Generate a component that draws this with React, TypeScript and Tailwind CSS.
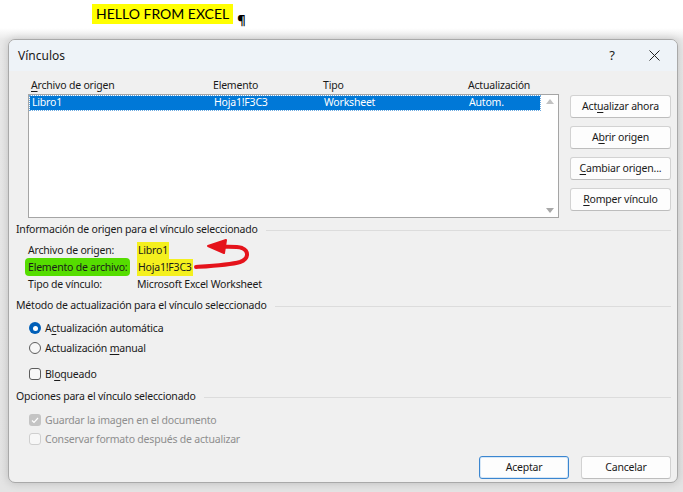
import React from "react"

const font = { fontFamily: '"Noto Sans", "Open Sans", sans-serif' }

function U({ children }: { children: React.ReactNode }) {
  return <span className="underline underline-offset-2">{children}</span>
}

function Btn({ children, primary, w = "w-[101px]" }: { children: React.ReactNode; primary?: boolean; w?: string }) {
  return (
    <div
      className={
        "flex h-[23px] shrink-0 items-center justify-center rounded-[3px] bg-[#fdfdfd] text-[10.5px] tracking-[-0.2px] text-[#1a1a1a] " +
        w +
        (primary ? " border border-[#3b86d0] shadow-[inset_0_0_0_1px_#d6e7f7]" : " border border-[#d2d2d2] border-b-[#bdbdbd]")
      }
    >
      {children}
    </div>
  )
}

function Section({ title }: { title: string }) {
  return (
    <div className="flex h-[14px] items-center gap-2 text-[10.5px] tracking-[-0.2px] text-[#1a1a1a]">
      <span className="whitespace-nowrap">{title}</span>
      <div className="h-px flex-1 bg-[#dcdcdc]" />
    </div>
  )
}

export default function App() {
  return (
    <div className="relative h-[492px] w-[683px] overflow-hidden bg-[linear-gradient(#ffffff_0px,#ffffff_28px,#e9e9e9_40px,#e4e4e4_100%)]" style={font}>
      {/* document line */}
      <div className="flex h-[30px] items-start pl-[92px] pt-[4px]">
        <span className="bg-[#ffff00] px-[4px] text-[14px] leading-[20px] text-black" style={{ fontFamily: 'Lato, "Liberation Sans", sans-serif' }}>
          HELLO FROM EXCEL
        </span>
        <span className="ml-[4px] mt-[8px] text-[13px] font-bold leading-[16px] text-black">¶</span>
      </div>

      {/* dialog */}
      <div className="ml-[8px] mt-[9px] flex h-[444px] w-[670px] flex-col overflow-hidden rounded-[7px] border border-[#a9a9a9] bg-[#f0f0f0] shadow-[0_0_10px_rgba(0,0,0,0.18)]">
        <div className="flex h-[31px] shrink-0 items-center bg-[#eef3f8] pl-[9px] text-[12px] text-[#1a1a1a]">
          <span className="flex-1">Vínculos</span>
          <span className="w-[20px] text-center text-[13px]">?</span>
          <svg className="ml-[27px] mr-[17px]" width="11" height="11" viewBox="0 0 11 11">
            <path d="M0.5 0.5L10.5 10.5M10.5 0.5L0.5 10.5" stroke="#222" strokeWidth="1" />
          </svg>
        </div>

        <div className="flex flex-col pl-[7px] pr-[6px] pt-[6px]">
          <div className="flex gap-[11px] pl-[12px]">
            {/* list */}
            <div className="flex w-[532px] flex-col">
              <div className="flex h-[17px] items-center pl-[3px] text-[10.5px] tracking-[-0.2px] text-[#1a1a1a]">
                <span className="w-[182px]"><U>A</U>rchivo de origen</span>
                <span className="w-[110px]">Elemento</span>
                <span className="w-[145px]">Tipo</span>
                <span>Actualización</span>
              </div>
              <div className="flex h-[124px] border border-[#a5a5a5] bg-white">
                <div className="flex-1 p-px">
                  <div className="flex h-[14px] items-center bg-[#0078d7] pl-[2px] text-[10.5px] tracking-[-0.2px] text-white outline-1 outline-dotted outline-[#6aa9e0]">
                    <span className="w-[182px]">Libro1</span>
                    <span className="w-[110px]">Hoja1!F3C3</span>
                    <span className="w-[145px]">Worksheet</span>
                    <span>Autom.</span>
                  </div>
                </div>
                <div className="flex w-[17px] flex-col items-center justify-between py-[4px]">
                  <svg width="8" height="5" viewBox="0 0 8 5"><path d="M0 5L4 0L8 5Z" fill="#c2c2c2" /></svg>
                  <svg width="8" height="5" viewBox="0 0 8 5"><path d="M0 0L4 5L8 0Z" fill="#a8a8a8" /></svg>
                </div>
              </div>
            </div>
            {/* side buttons */}
            <div className="flex flex-col gap-[8px] pt-[18px]">
              <Btn>Act<U>u</U>alizar ahora</Btn>
              <Btn>A<U>b</U>rir origen</Btn>
              <Btn><U>C</U>ambiar origen...</Btn>
              <Btn><U>R</U>omper vínculo</Btn>
            </div>
          </div>

          <div className="mt-[5px]">
            <Section title="Información de origen para el vínculo seleccionado" />
          </div>
          <div className="mt-[5px] flex flex-col pl-[12px] text-[10.5px] leading-[17px] tracking-[-0.2px] text-[#1a1a1a]">
            <div className="flex">
              <span className="w-[109px] whitespace-nowrap">Archivo de origen:</span>
              <span className="bg-[#f4f01e] px-px">Libro1</span>
            </div>
            <div className="flex">
              <span className="w-[109px] whitespace-nowrap"><span className="-ml-[3px] rounded-[4px] bg-[#55dd00] px-[3px] py-[2px]">Elemento de archivo:</span></span>
              <span className="bg-[#f4f01e] px-px">Hoja1!F3C3</span>
            </div>
            <div className="flex">
              <span className="w-[109px] whitespace-nowrap">Tipo de vínculo:</span>
              <span>Microsoft Excel Worksheet</span>
            </div>
          </div>

          <div className="mt-[6px]">
            <Section title="Método de actualización para el vínculo seleccionado" />
          </div>
          <div className="mt-[8px] flex flex-col gap-[6px] pl-[13px] text-[10.5px] leading-[14px] tracking-[-0.2px] text-[#1a1a1a]">
            <div className="flex items-center gap-[4px]">
              <span className="flex h-[12px] w-[12px] items-center justify-center rounded-full bg-[#005fb8]">
                <span className="h-[5px] w-[5px] rounded-full bg-white" />
              </span>
              <span>A<U>c</U>tualización automática</span>
            </div>
            <div className="flex items-center gap-[4px]">
              <span className="h-[12px] w-[12px] rounded-full border border-[#5c5c5c] bg-[#f7f7f7]" />
              <span>Actualización <U>m</U>anual</span>
            </div>
            <div className="mt-[6px] flex items-center gap-[4px]">
              <span className="h-[12px] w-[12px] rounded-[3px] border border-[#5c5c5c] bg-[#f7f7f7]" />
              <span>Bl<U>o</U>queado</span>
            </div>
          </div>

          <div className="mt-[9px]">
            <Section title="Opciones para el vínculo seleccionado" />
          </div>
          <div className="mt-[9px] flex flex-col gap-[5px] pl-[13px] text-[10.5px] leading-[14px] tracking-[-0.2px] text-[#8e8e8e]">
            <div className="flex items-center gap-[4px]">
              <span className="flex h-[12px] w-[12px] items-center justify-center rounded-[3px] bg-[#c4c4c4]">
                <svg width="8" height="7" viewBox="0 0 8 7"><path d="M1 3.5L3 5.5L7 1" stroke="#fff" strokeWidth="1.2" fill="none" /></svg>
              </span>
              <span>Guardar la imagen en el documento</span>
            </div>
            <div className="flex items-center gap-[4px]">
              <span className="h-[12px] w-[12px] rounded-[3px] border border-[#cfcfcf] bg-[#f7f7f7]" />
              <span>Conservar formato después de actualizar</span>
            </div>
          </div>

          <div className="mt-[10px] flex justify-end gap-[12px]">
            <Btn primary w="w-[90px]">Aceptar</Btn>
            <Btn w="w-[90px]">Cancelar</Btn>
          </div>
        </div>
      </div>

      {/* hand-drawn red arrow */}
      <svg className="pointer-events-none absolute left-0 top-0" width="683" height="492" viewBox="0 0 683 492">
        <path
          d="M196 267 C212 266 230 265 240 262 C249 259 249 251 242 248 C236 246 226 247 214 247"
          stroke="#e5131b"
          strokeWidth="4"
          fill="none"
          strokeLinecap="round"
        />
        <path d="M208 246 L226 240 L224 253 Z" fill="#e5131b" stroke="#e5131b" strokeWidth="2" strokeLinejoin="round" />
      </svg>
    </div>
  )
}
